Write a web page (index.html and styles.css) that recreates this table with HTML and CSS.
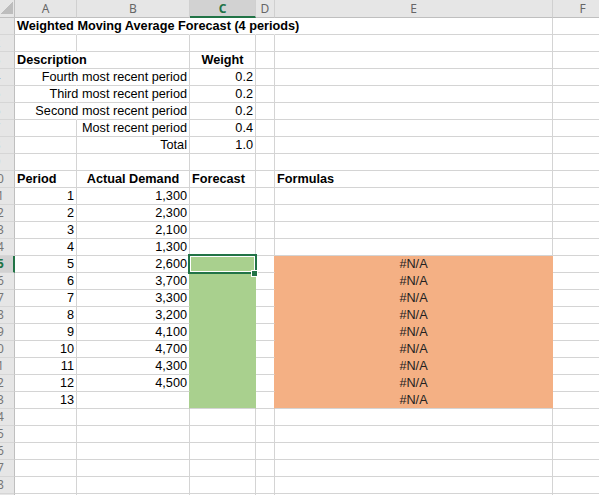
FILE: index.html
```html
<!DOCTYPE html>
<html>
<head>
<meta charset="utf-8">
<title>Weighted Moving Average</title>
<link rel="stylesheet" href="styles.css">
</head>
<body>
<div class="sheet">
<div class="corner"><span class="tri"></span></div><div class="ch">A</div><div class="ch">B</div><div class="ch sel">C</div><div class="ch">D</div><div class="ch">E</div><div class="ch">F</div>

<div class="rh"><span>1</span></div><div class="c b ov">Weighted Moving Average Forecast (4 periods)</div><div class="c ov"></div><div class="c ov"></div><div class="c ov"></div><div class="c"></div><div class="c"></div>
<div class="rh"><span>2</span></div><div class="c"></div><div class="c"></div><div class="c"></div><div class="c"></div><div class="c"></div><div class="c"></div>
<div class="rh"><span>3</span></div><div class="c b ov">Description</div><div class="c"></div><div class="c b ctr">Weight</div><div class="c"></div><div class="c"></div><div class="c"></div>
<div class="rh"><span>4</span></div><div class="c ov"></div><div class="c r">Fourth most recent period</div><div class="c r">0.2</div><div class="c"></div><div class="c"></div><div class="c"></div>
<div class="rh"><span>5</span></div><div class="c ov"></div><div class="c r">Third most recent period</div><div class="c r">0.2</div><div class="c"></div><div class="c"></div><div class="c"></div>
<div class="rh"><span>6</span></div><div class="c ov"></div><div class="c r">Second most recent period</div><div class="c r">0.2</div><div class="c"></div><div class="c"></div><div class="c"></div>
<div class="rh"><span>7</span></div><div class="c"></div><div class="c r">Most recent period</div><div class="c r">0.4</div><div class="c"></div><div class="c"></div><div class="c"></div>
<div class="rh"><span>8</span></div><div class="c"></div><div class="c r">Total</div><div class="c r">1.0</div><div class="c"></div><div class="c"></div><div class="c"></div>
<div class="rh"><span>9</span></div><div class="c"></div><div class="c"></div><div class="c"></div><div class="c"></div><div class="c"></div><div class="c"></div>
<div class="rh"><span>10</span></div><div class="c b">Period</div><div class="c b ctr">Actual Demand</div><div class="c b">Forecast</div><div class="c"></div><div class="c b">Formulas</div><div class="c"></div>
<div class="rh"><span>11</span></div><div class="c r">1</div><div class="c r">1,300</div><div class="c"></div><div class="c"></div><div class="c"></div><div class="c"></div>
<div class="rh"><span>12</span></div><div class="c r">2</div><div class="c r">2,300</div><div class="c"></div><div class="c"></div><div class="c"></div><div class="c"></div>
<div class="rh"><span>13</span></div><div class="c r">3</div><div class="c r">2,100</div><div class="c"></div><div class="c"></div><div class="c"></div><div class="c"></div>
<div class="rh"><span>14</span></div><div class="c r">4</div><div class="c r">1,300</div><div class="c"></div><div class="c"></div><div class="c"></div><div class="c"></div>
<div class="rh sel"><span>15</span></div><div class="c r">5</div><div class="c r bg">2,600</div><div class="c g"><div class="selbox"></div><div class="handle"></div></div><div class="c bo"></div><div class="c o ctr">#N/A</div><div class="c"></div>
<div class="rh"><span>16</span></div><div class="c r">6</div><div class="c r bg">3,700</div><div class="c g"></div><div class="c bo"></div><div class="c o ctr">#N/A</div><div class="c"></div>
<div class="rh"><span>17</span></div><div class="c r">7</div><div class="c r bg">3,300</div><div class="c g"></div><div class="c bo"></div><div class="c o ctr">#N/A</div><div class="c"></div>
<div class="rh"><span>18</span></div><div class="c r">8</div><div class="c r bg">3,200</div><div class="c g"></div><div class="c bo"></div><div class="c o ctr">#N/A</div><div class="c"></div>
<div class="rh"><span>19</span></div><div class="c r">9</div><div class="c r bg">4,100</div><div class="c g"></div><div class="c bo"></div><div class="c o ctr">#N/A</div><div class="c"></div>
<div class="rh"><span>20</span></div><div class="c r">10</div><div class="c r bg">4,700</div><div class="c g"></div><div class="c bo"></div><div class="c o ctr">#N/A</div><div class="c"></div>
<div class="rh"><span>21</span></div><div class="c r">11</div><div class="c r bg">4,300</div><div class="c g"></div><div class="c bo"></div><div class="c o ctr">#N/A</div><div class="c"></div>
<div class="rh"><span>22</span></div><div class="c r">12</div><div class="c r bg">4,500</div><div class="c g"></div><div class="c bo"></div><div class="c o ctr">#N/A</div><div class="c"></div>
<div class="rh"><span>23</span></div><div class="c r">13</div><div class="c r bg"></div><div class="c g end"></div><div class="c bo"></div><div class="c o ctr end">#N/A</div><div class="c"></div>
<div class="rh"><span>24</span></div><div class="c"></div><div class="c"></div><div class="c"></div><div class="c"></div><div class="c"></div><div class="c"></div>
<div class="rh"><span>25</span></div><div class="c"></div><div class="c"></div><div class="c"></div><div class="c"></div><div class="c"></div><div class="c"></div>
<div class="rh"><span>26</span></div><div class="c"></div><div class="c"></div><div class="c"></div><div class="c"></div><div class="c"></div><div class="c"></div>
<div class="rh"><span>27</span></div><div class="c"></div><div class="c"></div><div class="c"></div><div class="c"></div><div class="c"></div><div class="c"></div>
<div class="rh"><span>28</span></div><div class="c"></div><div class="c"></div><div class="c"></div><div class="c"></div><div class="c"></div><div class="c"></div>
<div class="rh"><span>29</span></div><div class="c"></div><div class="c"></div><div class="c"></div><div class="c"></div><div class="c"></div><div class="c"></div>
</div>
</body>
</html>
```

FILE: styles.css
```css
* { box-sizing: border-box; }
html, body { margin: 0; padding: 0; background: #fff; overflow: hidden; }
body { width: 599px; height: 495px; }

.sheet {
  display: grid;
  grid-template-columns: 15px 62px 113px 66px 19px 278px 60px;
  grid-template-rows: 18px;
  grid-auto-rows: 17px;
  font-family: "Liberation Sans", Arial, sans-serif;
  font-size: 12.7px;
  color: #000;
}

.corner {
  position: relative;
  background: #e6e6e6;
  border-right: 1px solid #bfbfbf;
  border-bottom: 1px solid #bfbfbf;
}
.tri {
  position: absolute;
  left: 0;
  top: 1px;
  width: 13px;
  height: 13px;
  background: linear-gradient(to bottom right, transparent 50%, #bdbdbd 50%);
}

.ch {
  background: #e6e6e6;
  border-right: 1px solid #d0d0d0;
  border-bottom: 1px solid #bfbfbf;
  text-align: center;
  font-family: "Noto Sans", "Open Sans", sans-serif;
  font-size: 12px;
  line-height: 17px;
  color: #666;
  overflow: hidden;
}
.ch.sel {
  background: #d2d2d2;
  border-bottom: 2px solid #217346;
  color: #217346;
  font-weight: bold;
}

.rh {
  background: #e6e6e6;
  border-right: 1px solid #bfbfbf;
  border-bottom: 1px solid #d6d6d6;
  overflow: hidden;
  font-family: "Noto Sans", "Open Sans", sans-serif;
  font-size: 12px;
  line-height: 16px;
  color: #777;
}
.rh span {
  display: block;
  width: 30px;
  margin-left: -18px;
  text-align: center;
}
.rh.sel {
  background: #d2d2d2;
  border-right: 2px solid #217346;
  color: #217346;
  font-weight: bold;
}

.c {
  position: relative;
  border-right: 1px solid #d4d4d4;
  border-bottom: 1px solid #d4d4d4;
  padding: 0 2px;
  line-height: 16px;
  white-space: nowrap;
}
.b { font-weight: bold; }
.r { display: flex; justify-content: flex-end; }
.ctr { text-align: center; }
.ov { border-right-color: transparent; }

.g { background: #a9d08e; border-right-color: #a9d08e; border-bottom-color: #a9d08e; }
.bg { border-right-color: #a9d08e; }
.o { background: #f4b084; border-right-color: #f4b084; border-bottom-color: #f4b084; color: #222; }
.bo { border-right-color: #f4b084; }
.g.end, .o.end { border-bottom-color: #d4d4d4; }

.selbox {
  position: absolute;
  left: -2px;
  top: -2px;
  right: -2px;
  bottom: -2px;
  border: 2px solid #217346;
  box-shadow: inset 0 0 0 1px #fff;
  z-index: 2;
}
.handle {
  position: absolute;
  right: -2px;
  bottom: -4px;
  width: 5px;
  height: 5px;
  background: #217346;
  box-shadow: 0 0 0 1px #fff;
  z-index: 3;
}
```
